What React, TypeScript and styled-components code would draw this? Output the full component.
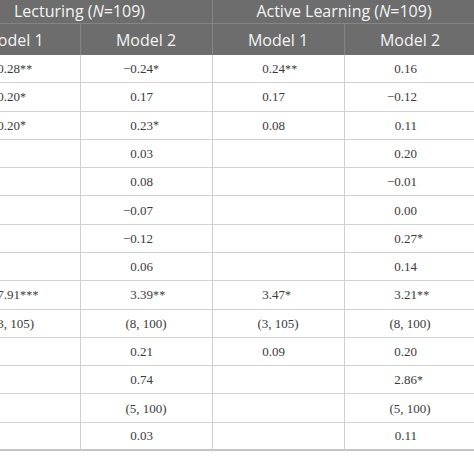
import React from "react";
import styled, { createGlobalStyle } from "styled-components";

const Global = createGlobalStyle`
  html, body { margin: 0; padding: 0; background: #ffffff; }
  body { width: 474px; height: 474px; overflow: hidden; }
`;

const Viewport = styled.div`
  width: 474px;
  height: 474px;
  overflow: hidden;
  background: #fff;
`;

const Grid = styled.div`
  display: grid;
  grid-template-columns: repeat(4, 132px);
  margin-left: -52.5px;
  margin-top: -3px;
  width: 528px;
`;

const GroupHead = styled.div<{ $first?: boolean }>`
  grid-column: span 2;
  height: 27px;
  display: flex;
  align-items: center;
  justify-content: center;
  background: #6d6d6d;
  color: #f4f4f4;
  font-family: "Open Sans", "Noto Sans", sans-serif;
  font-size: 16px;
  box-sizing: border-box;
  border-bottom: 1px solid #858585;
  border-left: ${(p) => (p.$first ? "none" : "1px solid #858585")};
  padding-top: 1px;
`;

const ColHead = styled.div<{ $first?: boolean }>`
  height: 31px;
  display: flex;
  align-items: center;
  justify-content: center;
  background: #6d6d6d;
  color: #f4f4f4;
  font-family: "Open Sans", "Noto Sans", sans-serif;
  font-size: 16px;
  box-sizing: border-box;
  border-left: ${(p) => (p.$first ? "none" : "1px solid #858585")};
`;

const Cell = styled.div<{ $first?: boolean; $last?: boolean; $center?: boolean }>`
  height: 28.29px;
  box-sizing: border-box;
  display: flex;
  align-items: center;
  justify-content: ${(p) => (p.$center ? "center" : "flex-start")};
  border-bottom: ${(p) => (p.$last ? "2px solid #c4c4c4" : "1px solid #d2d2d2")};
  border-left: ${(p) => (p.$first ? "none" : "1px solid #cfcfcf")};
  font-family: "Liberation Serif", "Times New Roman", serif;
  font-size: 13px;
  color: #3a3a3a;
  white-space: nowrap;
  padding-top: 1px;
`;

const Num = styled.span`
  display: inline-block;
  width: 72.5px;
  text-align: right;
  flex-shrink: 0;
`;

const Stars = styled.span`
  display: inline-block;
  font-size: 12px;
  letter-spacing: 0.3px;
`;

type V = string | null;

const rows: V[][] = [
  ["0.28**", "\u22120.24*", "0.24**", "0.16"],
  ["0.20*", "0.17", "0.17", "\u22120.12"],
  ["0.20*", "0.23*", "0.08", "0.11"],
  [null, "0.03", null, "0.20"],
  [null, "0.08", null, "\u22120.01"],
  [null, "\u22120.07", null, "0.00"],
  [null, "\u22120.12", null, "0.27*"],
  [null, "0.06", null, "0.14"],
  ["17.91***", "3.39**", "3.47*", "3.21**"],
  ["(3, 105)", "(8, 100)", "(3, 105)", "(8, 100)"],
  [null, "0.21", "0.09", "0.20"],
  [null, "0.74", null, "2.86*"],
  [null, "(5, 100)", null, "(5, 100)"],
  [null, "0.03", null, "0.11"],
];

function Value({ v }: { v: string }) {
  const m = v.match(/^([^*]*)(\**)$/);
  const num = m ? m[1] : v;
  const st = m ? m[2] : "";
  return (
    <>
      <Num>{num}</Num>
      {st && <Stars>{st}</Stars>}
    </>
  );
}

export default function App() {
  return (
    <Viewport>
      <Global />
      <Grid>
        <GroupHead $first>
          <span>
            Lecturing (<i>N</i>=109)
          </span>
        </GroupHead>
        <GroupHead>
          <span>
            Active Learning (<i>N</i>=109)
          </span>
        </GroupHead>
        <ColHead $first>Model 1</ColHead>
        <ColHead>Model 2</ColHead>
        <ColHead>Model 1</ColHead>
        <ColHead>Model 2</ColHead>
        {rows.map((r, ri) =>
          r.map((v, ci) => {
            const paren = !!v && v.startsWith("(");
            return (
              <Cell
                key={`${ri}-${ci}`}
                $first={ci === 0}
                $last={ri === rows.length - 1}
                $center={paren}
              >
                {v && (paren ? v : <Value v={v} />)}
              </Cell>
            );
          })
        )}
      </Grid>
    </Viewport>
  );
}
